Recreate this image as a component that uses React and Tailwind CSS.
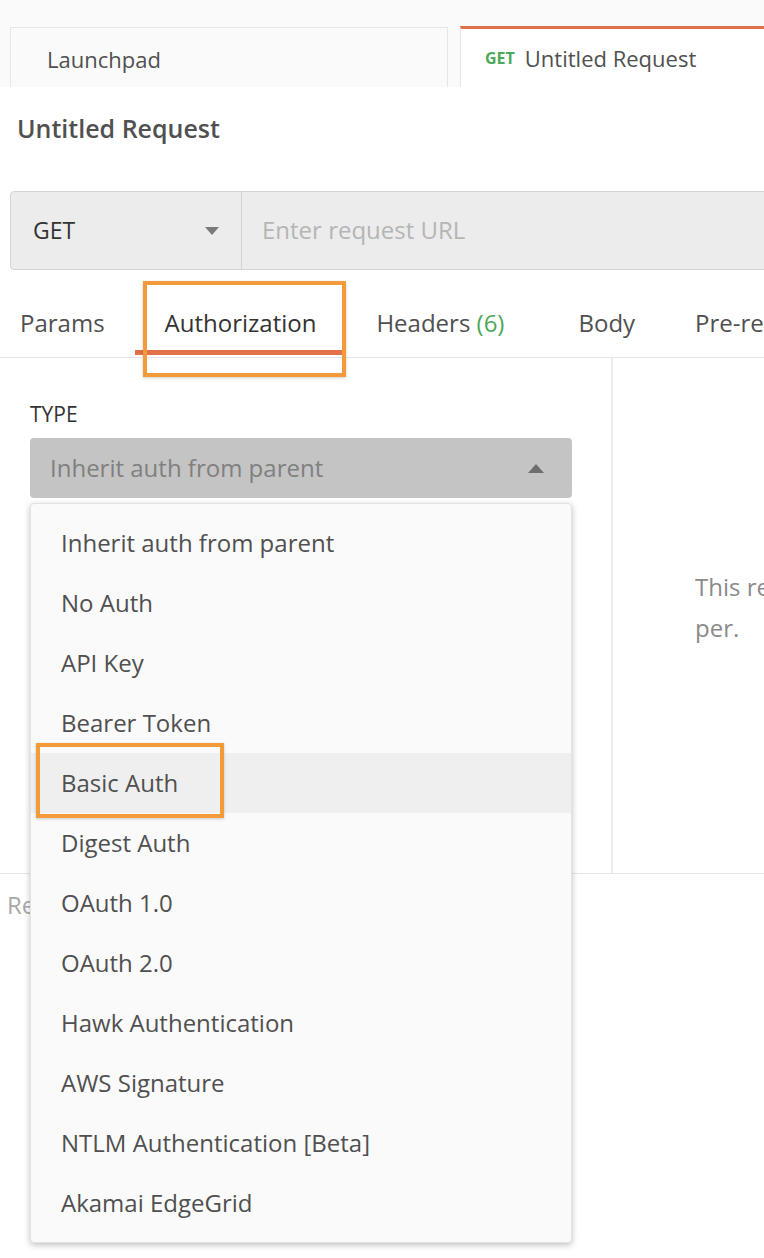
import React from 'react';

const authTypes = [
  'Inherit auth from parent',
  'No Auth',
  'API Key',
  'Bearer Token',
  'Basic Auth',
  'Digest Auth',
  'OAuth 1.0',
  'OAuth 2.0',
  'Hawk Authentication',
  'AWS Signature',
  'NTLM Authentication [Beta]',
  'Akamai EdgeGrid',
];

const font = { fontFamily: '"Open Sans", "Noto Sans", sans-serif' };

function Tab({ children, active, className = '' }) {
  return (
    <div className={`flex h-full shrink-0 flex-col justify-end ${className}`}>
      <div className={`whitespace-nowrap px-[30px] pb-[11px] text-[24px] leading-[32px] ${active ? 'text-[#333]' : 'text-[#505050]'}`}>
        {children}
      </div>
      <div className={`mb-[2px] h-[5px] ${active ? 'bg-[#e2714a]' : 'bg-transparent'}`} />
    </div>
  );
}

export default function App() {
  return (
    <div className="relative h-[1258px] w-[764px] overflow-hidden bg-white" style={font}>
      {/* top tabs */}
      <div className="flex h-[87px] items-end bg-[#fafafa] pl-[10px]">
        <div className="flex h-[60px] w-[438px] items-center border border-b-0 border-[#e6e6e6] bg-[#fafafa] pl-[36px] pt-[4px] text-[22px] text-[#505050]">
          Launchpad
        </div>
        <div className="ml-[12px] flex h-[61px] flex-1 items-center border-l border-t-[3px] border-l-[#e6e6e6] border-t-[#e2714a] bg-white pl-[24px]">
          <span className="mr-[10px] text-[16px] font-bold text-[#4ca95a]">GET</span>
          <span className="whitespace-nowrap text-[22px] text-[#505050]">Untitled Request</span>
        </div>
      </div>

      {/* request name */}
      <div className="pl-[17px] pt-[23px] text-[25px] font-semibold leading-[36px] text-[#505050]">
        Untitled Request
      </div>

      {/* url bar */}
      <div className="ml-[10px] mt-[45px] flex h-[79px] w-[800px] rounded-l-[4px] border border-[#d4d4d4] bg-[#ececec]">
        <div className="flex w-[231px] items-center justify-between border-r border-[#d4d4d4] pl-[22px] pr-[22px]">
          <span className="text-[23px] text-[#333]">GET</span>
          <svg width="14" height="8" viewBox="0 0 14 8">
            <path d="M0 0 L14 0 L7 8 Z" fill="#7a7a7a" />
          </svg>
        </div>
        <div className="flex items-center pb-[2px] pl-[20px] text-[24px] text-[#b5b5b5]">Enter request URL</div>
      </div>

      {/* request tabs */}
      <div className="flex h-[88px] border-b border-[#e6e6e6]">
        <Tab className="ml-[-10px]">Params</Tab>
        <Tab active>Authorization</Tab>
        <Tab>
          Headers <span className="text-[#4ca95a]">(6)</span>
        </Tab>
        <Tab className="pl-[14px]">Body</Tab>
        <Tab>Pre-request Script</Tab>
      </div>

      {/* auth content */}
      <div className="flex h-[516px] border-b border-[#e6e6e6]">
        <div className="w-[613px] shrink-0 border-r-2 border-[#ececec] pl-[30px] pt-[41px]">
          <div className="text-[21px] leading-[30px] text-[#333]">TYPE</div>
          <div className="relative mt-[9px] w-[542px]">
            <div className="flex h-[60px] items-center justify-between rounded-[4px] bg-[#c4c4c4] pl-[20px] pr-[28px] text-[24px] text-[#808080]">
              <span>Inherit auth from parent</span>
              <svg width="16" height="9" viewBox="0 0 16 9">
                <path d="M0 9 L16 9 L8 0 Z" fill="#6e6e6e" />
              </svg>
            </div>

            {/* open menu */}
            <div className="absolute left-0 top-[65px] z-10 w-[542px] rounded-[4px] border border-[#e2e2e2] bg-[#fafafa] py-[9px] shadow-[0_2px_6px_rgba(0,0,0,0.25)]">
              {authTypes.map((t) => (
                <div
                  key={t}
                  className={`flex h-[60px] items-center pl-[30px] text-[24px] text-[#505050] ${t === 'Basic Auth' ? 'bg-[#efefef]' : ''}`}
                >
                  {t}
                </div>
              ))}
            </div>
          </div>
        </div>
        <div className="flex min-w-0 flex-1 flex-col justify-center pb-[18px] pl-[82px] text-[24px] leading-[41px] text-[#8a8a8a]">
          <div className="whitespace-nowrap">This request does not use any authorization hel-</div>
          <div>per.</div>
        </div>
      </div>

      {/* response */}
      <div className="pl-[7px] pt-[13px] text-[24px] leading-[36px] text-[#a8a8a8]">Response</div>

      {/* annotation boxes */}
      <div className="absolute left-[143px] top-[281px] z-20 h-[96px] w-[203px] border-4 border-[#f29b38] shadow-[0_1px_3px_rgba(0,0,0,0.2)]" />
      <div className="absolute left-[36px] top-[743px] z-20 h-[75px] w-[188px] border-4 border-[#f29b38] shadow-[0_1px_3px_rgba(0,0,0,0.2)]" />
    </div>
  );
}
